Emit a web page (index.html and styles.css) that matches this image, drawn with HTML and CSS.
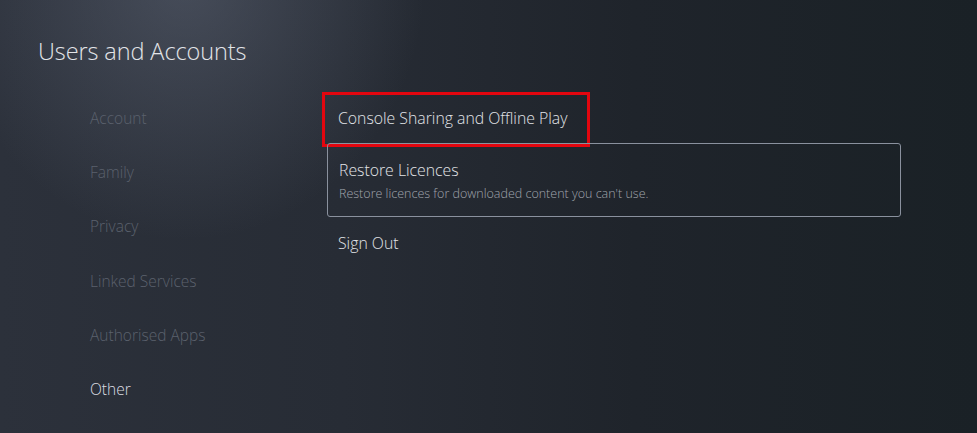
FILE: index.html
```html
<!DOCTYPE html>
<html lang="en">
<head>
<meta charset="utf-8">
<title>Users and Accounts</title>
<link rel="stylesheet" href="styles.css">
</head>
<body>
<div class="screen">
  <header class="header">
    <h1 class="title">Users and Accounts</h1>
  </header>
  <main class="content">
    <nav class="nav">
      <div class="nav-item">Account</div>
      <div class="nav-item">Family</div>
      <div class="nav-item">Privacy</div>
      <div class="nav-item">Linked Services</div>
      <div class="nav-item">Authorised Apps</div>
      <div class="nav-item nav-item--active">Other</div>
    </nav>
    <section class="options">
      <div class="option option--marked">
        <span class="option-title">Console Sharing and Offline Play</span>
        <span class="mark"></span>
      </div>
      <div class="option option--focused">
        <span class="option-title">Restore Licences</span>
        <span class="option-desc">Restore licences for downloaded content you can't use.</span>
      </div>
      <div class="option option--last">
        <span class="option-title">Sign Out</span>
      </div>
    </section>
  </main>
</div>
</body>
</html>
```

FILE: styles.css
```css
html, body {
  margin: 0;
  padding: 0;
}
body {
  width: 977px;
  height: 433px;
  overflow: hidden;
  font-family: "Open Sans", "Noto Sans", sans-serif;
  background:
    radial-gradient(ellipse 240px 260px at 185px -20px, rgba(110, 118, 136, 0.42), rgba(110, 118, 136, 0) 100%),
    linear-gradient(90deg, #2c313b 0%, #272c35 35%, #1f242b 65%, #1a2126 100%);
}
.screen {
  display: flex;
  flex-direction: column;
  height: 433px;
}
.header {
  padding: 36px 0 0 38px;
  height: 55px;
  box-sizing: border-box;
}
.title {
  margin: 0;
  font-weight: 300;
  font-size: 23.5px;
  line-height: 30px;
  color: #e2e4e8;
  letter-spacing: -0.1px;
}
.content {
  display: flex;
  flex: 1;
  padding-top: 36px;
}
.nav {
  width: 232px;
  padding-left: 90px;
  display: flex;
  flex-direction: column;
}
.nav-item {
  height: 54.2px;
  line-height: 54px;
  font-size: 15.5px;
  font-weight: 300;
  color: #5b616d;
}
.nav-item--active {
  color: #dcdee2;
}
.options {
  width: 574px;
  margin-left: 5px;
  margin-top: 2px;
  display: flex;
  flex-direction: column;
}
.option {
  position: relative;
  height: 50px;
  padding-left: 11px;
  display: flex;
  flex-direction: column;
  justify-content: center;
  box-sizing: border-box;
}
.option-title {
  font-size: 15.8px;
  font-weight: 300;
  color: #e2e4e8;
  line-height: 22px;
}
.option-desc {
  font-size: 12.5px;
  font-weight: 300;
  color: #a0a5ad;
  line-height: 16px;
}
.option--focused {
  height: 74px;
  border: 1.5px solid #8a919e;
  border-radius: 3px;
}
.option--focused .option-desc {
  margin-top: 5px;
}
.option--last {
  height: 52px;
}
.mark {
  position: absolute;
  left: -5px;
  top: -1px;
  width: 268px;
  height: 55px;
  border: 3px solid #e3060f;
  box-sizing: border-box;
}
```
